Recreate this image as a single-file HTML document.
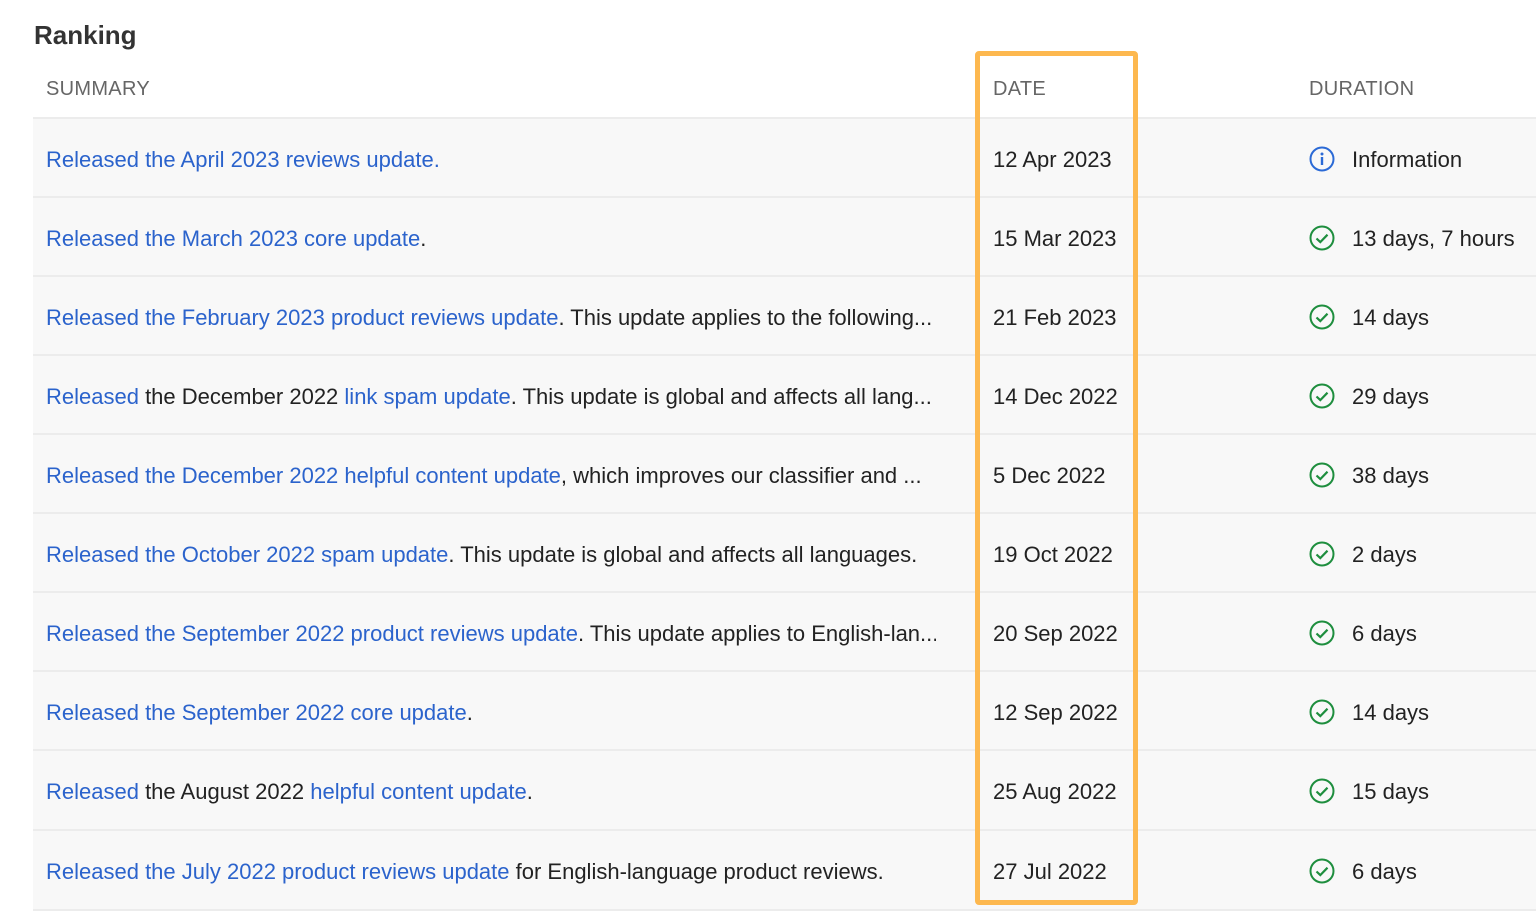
<!DOCTYPE html>
<html><head><meta charset="utf-8"><style>
body{margin:0;width:1536px;height:914px;background:#fff;font-family:"Liberation Sans",sans-serif;position:relative;overflow:hidden}
h1{position:absolute;left:34px;top:20px;margin:0;font-size:26px;font-weight:bold;color:#333}
.hd{position:absolute;top:78px;font-size:20px;color:#666;letter-spacing:.3px}
.row{position:absolute;left:33px;width:1503px;height:78px;background:#f8f8f8;border-top:2px solid #ececec}
.row div{position:absolute;top:2px;line-height:78px;font-size:22px;color:#222;white-space:nowrap}
.s{left:13px;width:890px;overflow:hidden;text-overflow:clip}
.d{left:960px}
.u{left:1319px}
.ic{left:1276px!important;top:27px!important;line-height:0!important}
a{color:#2b63cc;text-decoration:none}
.box{position:absolute;left:975px;top:51px;width:153px;height:844px;border:5px solid #fdb84f;border-radius:4px}
</style></head><body>
<h1>Ranking</h1>
<div class="hd" style="left:46px">SUMMARY</div>
<div class="hd" style="left:993px">DATE</div>
<div class="hd" style="left:1309px">DURATION</div>

<div class="row" style="top:117px"><div class="s"><a>Released the April 2023 reviews update.</a></div><div class="d">12 Apr 2023</div><div class="ic"><svg width="26" height="26" viewBox="0 0 26 26"><circle cx="13" cy="13" r="11.5" fill="none" stroke="#2b6ad6" stroke-width="2"/><circle cx="13" cy="8" r="1.5" fill="#2b6ad6"/><rect x="11.8" y="11" width="2.4" height="8" fill="#2b6ad6"/></svg></div><div class="u" style="left:1319px">Information</div></div>

<div class="row" style="top:196px"><div class="s"><a>Released the March 2023 core update</a>.</div><div class="d">15 Mar 2023</div><div class="ic"><svg width="26" height="26" viewBox="0 0 26 26"><circle cx="13" cy="13" r="11.5" fill="none" stroke="#1e8e3e" stroke-width="2"/><path d="M7.5 13.5l3.8 3.6 7.2-7.4" fill="none" stroke="#1e8e3e" stroke-width="2.2"/></svg></div><div class="u">13 days, 7 hours</div></div>

<div class="row" style="top:275px"><div class="s"><a>Released the February 2023 product reviews update</a>. This update applies to the following...</div><div class="d">21 Feb 2023</div><div class="ic"><svg width="26" height="26" viewBox="0 0 26 26"><circle cx="13" cy="13" r="11.5" fill="none" stroke="#1e8e3e" stroke-width="2"/><path d="M7.5 13.5l3.8 3.6 7.2-7.4" fill="none" stroke="#1e8e3e" stroke-width="2.2"/></svg></div><div class="u">14 days</div></div>

<div class="row" style="top:354px"><div class="s"><a>Released</a> the December 2022 <a>link spam update</a>. This update is global and affects all lang...</div><div class="d">14 Dec 2022</div><div class="ic"><svg width="26" height="26" viewBox="0 0 26 26"><circle cx="13" cy="13" r="11.5" fill="none" stroke="#1e8e3e" stroke-width="2"/><path d="M7.5 13.5l3.8 3.6 7.2-7.4" fill="none" stroke="#1e8e3e" stroke-width="2.2"/></svg></div><div class="u">29 days</div></div>

<div class="row" style="top:433px"><div class="s"><a>Released the December 2022 helpful content update</a>, which improves our classifier and ...</div><div class="d">5 Dec 2022</div><div class="ic"><svg width="26" height="26" viewBox="0 0 26 26"><circle cx="13" cy="13" r="11.5" fill="none" stroke="#1e8e3e" stroke-width="2"/><path d="M7.5 13.5l3.8 3.6 7.2-7.4" fill="none" stroke="#1e8e3e" stroke-width="2.2"/></svg></div><div class="u">38 days</div></div>

<div class="row" style="top:512px"><div class="s"><a>Released the October 2022 spam update</a>. This update is global and affects all languages.</div><div class="d">19 Oct 2022</div><div class="ic"><svg width="26" height="26" viewBox="0 0 26 26"><circle cx="13" cy="13" r="11.5" fill="none" stroke="#1e8e3e" stroke-width="2"/><path d="M7.5 13.5l3.8 3.6 7.2-7.4" fill="none" stroke="#1e8e3e" stroke-width="2.2"/></svg></div><div class="u">2 days</div></div>

<div class="row" style="top:591px"><div class="s"><a>Released the September 2022 product reviews update</a>. This update applies to English-lan...</div><div class="d">20 Sep 2022</div><div class="ic"><svg width="26" height="26" viewBox="0 0 26 26"><circle cx="13" cy="13" r="11.5" fill="none" stroke="#1e8e3e" stroke-width="2"/><path d="M7.5 13.5l3.8 3.6 7.2-7.4" fill="none" stroke="#1e8e3e" stroke-width="2.2"/></svg></div><div class="u">6 days</div></div>

<div class="row" style="top:670px"><div class="s"><a>Released the September 2022 core update</a>.</div><div class="d">12 Sep 2022</div><div class="ic"><svg width="26" height="26" viewBox="0 0 26 26"><circle cx="13" cy="13" r="11.5" fill="none" stroke="#1e8e3e" stroke-width="2"/><path d="M7.5 13.5l3.8 3.6 7.2-7.4" fill="none" stroke="#1e8e3e" stroke-width="2.2"/></svg></div><div class="u">14 days</div></div>

<div class="row" style="top:749px"><div class="s"><a>Released</a> the August 2022 <a>helpful content update</a>.</div><div class="d">25 Aug 2022</div><div class="ic"><svg width="26" height="26" viewBox="0 0 26 26"><circle cx="13" cy="13" r="11.5" fill="none" stroke="#1e8e3e" stroke-width="2"/><path d="M7.5 13.5l3.8 3.6 7.2-7.4" fill="none" stroke="#1e8e3e" stroke-width="2.2"/></svg></div><div class="u">15 days</div></div>

<div class="row" style="top:829px"><div class="s"><a>Released the July 2022 product reviews update</a> for English-language product reviews.</div><div class="d">27 Jul 2022</div><div class="ic"><svg width="26" height="26" viewBox="0 0 26 26"><circle cx="13" cy="13" r="11.5" fill="none" stroke="#1e8e3e" stroke-width="2"/><path d="M7.5 13.5l3.8 3.6 7.2-7.4" fill="none" stroke="#1e8e3e" stroke-width="2.2"/></svg></div><div class="u">6 days</div></div>
<div style="position:absolute;left:33px;top:909px;width:1503px;height:2px;background:#ececec"></div>

<div class="box"></div>
</body></html>
